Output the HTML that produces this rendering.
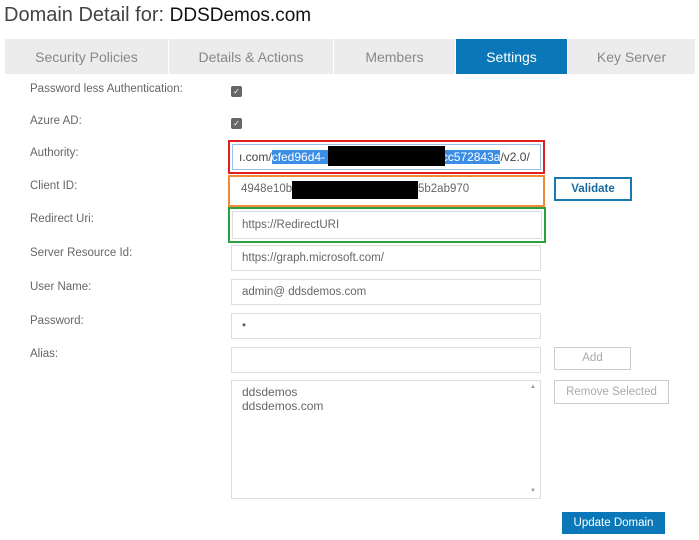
<!DOCTYPE html>
<html><head><style>
body{margin:0;width:699px;height:540px;background:#fff;font-family:"Liberation Sans",sans-serif;position:relative;overflow:hidden;color:#555}
.a{position:absolute}
.tab{position:absolute;top:39px;height:35px;background:#ececec;color:#888;font-size:14px;line-height:37px;text-align:center}
.lbl{position:absolute;left:30px;font-size:11.5px;color:#666}
.inp{position:absolute;left:231px;font-size:11.5px;color:#666;line-height:24px;padding-left:10px;box-sizing:border-box;width:310px;height:26px;border:1px solid #ddd}
.cb{position:absolute;left:231px;width:11px;height:11px;background:#666;border-radius:2px;color:#fff;font-size:8px;line-height:11px;text-align:center}
.btn{position:absolute;border:1px solid #ccc;color:#aaa;font-size:11.5px;text-align:center;box-sizing:border-box}
</style></head><body>
<div class="a" style="left:4px;top:4px;font-size:20px;color:#444">Domain Detail for: <span style="color:#111;font-size:19px">DDSDemos.com</span></div>
<div class="tab" style="left:5px;width:163px">Security Policies</div>
<div class="tab" style="left:169px;width:164px">Details &amp; Actions</div>
<div class="tab" style="left:334px;width:121px">Members</div>
<div class="tab" style="left:456px;width:111px;background:#0a78b8;color:#fff">Settings</div>
<div class="tab" style="left:568px;width:127px">Key Server</div>

<div class="lbl" style="top:83px">Password less Authentication:</div>
<div class="cb" style="top:86px">✓</div>
<div class="lbl" style="top:115px">Azure AD:</div>
<div class="cb" style="top:118px">✓</div>
<div class="lbl" style="top:147px">Authority:</div>
<div class="lbl" style="top:180px">Client ID:</div>
<div class="lbl" style="top:213px">Redirect Uri:</div>
<div class="lbl" style="top:247px">Server Resource Id:</div>
<div class="lbl" style="top:281px">User Name:</div>
<div class="lbl" style="top:315px">Password:</div>
<div class="lbl" style="top:348px">Alias:</div>

<div class="a" style="left:228px;top:140px;width:317px;height:34px;border:2px solid #e02020;box-sizing:border-box"></div>
<div class="a" style="left:232px;top:144px;width:309px;height:26px;border:1px solid #9bc0ea;box-sizing:border-box;font-size:12px;line-height:24px;padding-left:6px;color:#444;white-space:nowrap;overflow:hidden">ı.com/<span style="background:#3a8ee6;color:#fff">cfed96d4-&nbsp;&nbsp;&nbsp;&nbsp;&nbsp;&nbsp;&nbsp;&nbsp;&nbsp;&nbsp;&nbsp;&nbsp;&nbsp;&nbsp;&nbsp;&nbsp;&nbsp;&nbsp;&nbsp;&nbsp;&nbsp;&nbsp;&nbsp;&nbsp;&nbsp;&nbsp;&nbsp;&nbsp;&nbsp;&nbsp;&nbsp;&nbsp;&nbsp;&nbsp;&nbsp;cc572843a</span>/v2.0/</div>
<div class="a" style="left:328px;top:146px;width:117px;height:20px;background:#000"></div>

<div class="a" style="left:228px;top:175px;width:317px;height:32px;border:2px solid #f08a3a;box-sizing:border-box"></div>
<div class="a" style="left:241px;top:183px;font-size:11.5px;color:#666">4948e10b</div>
<div class="a" style="left:292px;top:181px;width:126px;height:18px;background:#000"></div>
<div class="a" style="left:418px;top:183px;font-size:11.5px;color:#666">5b2ab970</div>
<div class="btn" style="left:554px;top:177px;width:78px;height:24px;border:2px solid #1a7ab0;color:#1a6aa0;font-weight:bold;line-height:20px">Validate</div>

<div class="a" style="left:228px;top:207px;width:318px;height:36px;border:2px solid #2aa040;box-sizing:border-box"></div>
<div class="a" style="left:232px;top:211px;width:310px;height:28px;border:1px solid #ddd;box-sizing:border-box;font-size:11.5px;line-height:26px;padding-left:9px;color:#666">https://RedirectURI</div>

<div class="inp" style="top:245px">https://graph.microsoft.com/</div>
<div class="inp" style="top:279px">admin@ ddsdemos.com</div>
<div class="inp" style="top:313px">•</div>
<div class="inp" style="top:347px"></div>
<div class="inp" style="top:380px;height:119px;line-height:14px;padding-top:4px;font-size:12px">ddsdemos<br>ddsdemos.com</div>
<div class="a" style="left:530px;top:384px;font-size:6px;color:#999">▲</div>
<div class="a" style="left:530px;top:488px;font-size:6px;color:#999">▼</div>

<div class="btn" style="left:554px;top:347px;width:77px;height:23px;line-height:21px">Add</div>
<div class="btn" style="left:554px;top:380px;width:115px;height:24px;line-height:22px">Remove Selected</div>
<div class="btn" style="left:562px;top:512px;width:103px;height:22px;line-height:22px;background:#0a78b8;color:#fff;border:none">Update Domain</div>
</body></html>
